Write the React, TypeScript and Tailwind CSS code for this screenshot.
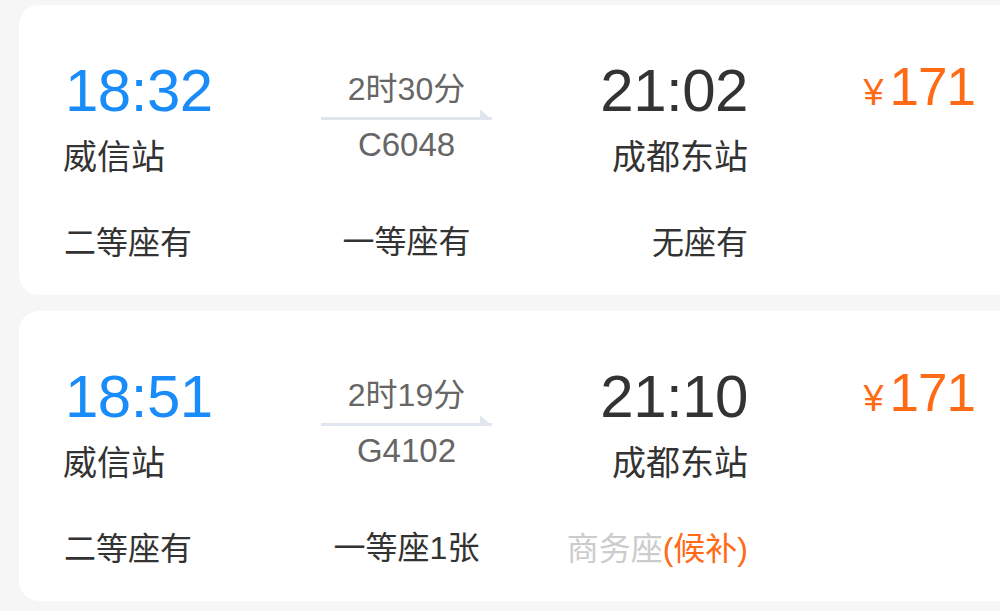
import React from "react";

type Train = {
  depart: string;
  from: string;
  duration: string;
  code: string;
  arrive: string;
  to: string;
  price: string;
  seats: React.ReactNode[];
};

const trains: Train[] = [
  {
    depart: "18:32",
    from: "威信站",
    duration: "2时30分",
    code: "C6048",
    arrive: "21:02",
    to: "成都东站",
    price: "171",
    seats: ["二等座有", "一等座有", "无座有"],
  },
  {
    depart: "18:51",
    from: "威信站",
    duration: "2时19分",
    code: "G4102",
    arrive: "21:10",
    to: "成都东站",
    price: "171",
    seats: [
      "二等座有",
      "一等座1张",
      <>
        <span className="text-[#cccccc]">商务座</span>
        <span className="text-[#ff6a14]">(候补)</span>
      </>,
    ],
  },
];

const font = "font-['Liberation_Sans','Noto_Sans_CJK_SC',sans-serif]";

function Arrow() {
  return (
    <svg width="171" height="12" viewBox="0 0 171 12" className="block">
      <rect x="0" y="8" width="171" height="3" fill="#e1e6ee" />
      <polygon points="159,0 159,11 171,11" fill="#e1e6ee" />
    </svg>
  );
}

function TrainCard({ t }: { t: Train }) {
  return (
    <div className="ml-[19px] w-[1000px] h-[290px] rounded-[20px] bg-white flex pl-[46px]">
      {/* departure */}
      <div className="w-[256px] flex flex-col items-start">
        <div className="mt-[56px] text-[60px] leading-none tracking-[-0.5px] text-[#1a8cfa]">{t.depart}</div>
        <div className="mt-[19px] text-[34px] leading-none text-[#333333] -ml-[2px]">{t.from}</div>
        <div className="mt-[53px] text-[32px] leading-none text-[#333333] -ml-[1px]">{t.seats[0]}</div>
      </div>

      {/* duration / train number */}
      <div className="w-[171px] flex flex-col items-center">
        <div className="mt-[68px] text-[32px] leading-none text-[#666666]">{t.duration}</div>
        <div className="mt-[4px]">
          <Arrow />
        </div>
        <div className="mt-[7px] text-[33px] leading-none text-[#666666]">{t.code}</div>
        <div className="mt-[65px] text-[32px] leading-none text-[#333333] whitespace-nowrap">
          {t.seats[1]}
        </div>
      </div>

      {/* arrival */}
      <div className="w-[256px] flex flex-col items-end">
        <div className="mt-[56px] text-[60px] leading-none tracking-[-0.5px] text-[#333333]">{t.arrive}</div>
        <div className="mt-[19px] text-[34px] leading-none text-[#333333]">{t.to}</div>
        <div className="mt-[53px] text-[32px] leading-none text-[#333333] whitespace-nowrap">
          {t.seats[2]}
        </div>
      </div>

      {/* price */}
      <div className="w-[227px] flex justify-end items-baseline mt-[55px] h-[60px] text-[#ff6a14]">
        <span className="text-[36px] leading-none mr-[6px]">¥</span>
        <span className="text-[53px] leading-none tracking-[-1px]">{t.price}</span>
      </div>
    </div>
  );
}

export default function App() {
  return (
    <div className={`${font} w-[1000px] h-[611px] overflow-hidden bg-[#f6f6f6] pt-[5px] flex flex-col gap-[16px]`}>
      {trains.map((t) => (
        <TrainCard key={t.code} t={t} />
      ))}
    </div>
  );
}
